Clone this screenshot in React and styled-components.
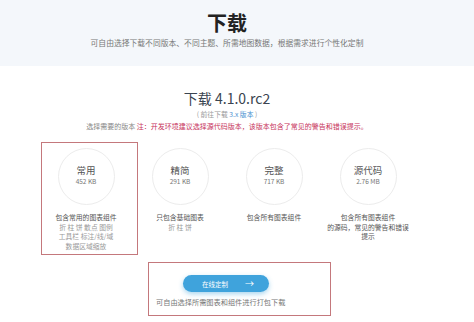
import React from "react";
import styled, { createGlobalStyle } from "styled-components";

const Global = createGlobalStyle`
  html, body { margin: 0; padding: 0; background: #fff; }
  body { font-family: "Noto Sans CJK SC", "Noto Sans", sans-serif; color: #333; width: 474px; height: 322px; overflow: hidden; }
`;

const Header = styled.header`
  background: #f4f7fb;
  height: 66px;
  box-sizing: border-box;
  padding-top: 11px;
`;

const Inner = styled.div`
  width: 454px;
  text-align: center;
`;

const Title = styled.h1`
  margin: 0;
  font-size: 20px;
  line-height: 24px;
  font-weight: 700;
  color: #222;
`;

const Subtitle = styled.p`
  margin: 2px 0 0;
  font-size: 7.8px;
  line-height: 12px;
  color: #777;
`;

const Main = styled.main`
  width: 454px;
  text-align: center;
  padding-top: 22px;
`;

const Version = styled.h2`
  margin: 0;
  font-size: 14px;
  line-height: 20px;
  font-weight: 400;
  color: #3a4450;
`;

const Hint = styled.div`
  margin-top: 1px;
  font-size: 6.8px;
  line-height: 10px;
  color: #999;
`;

const Link = styled.span`
  color: #4a8fcf;
`;

const Notice = styled.div`
  margin-top: 2px;
  font-size: 7px;
  line-height: 10px;
  color: #888;
`;

const Warn = styled.span`
  color: #c7325a;
`;

const Cards = styled.div`
  display: flex;
  padding-left: 39px;
  margin-top: 17px;
`;

const Card = styled.div`
  position: relative;
  width: 94px;
  height: 107px;
  display: flex;
  flex-direction: column;
  align-items: center;
  &::before {
    content: "";
    display: ${(p) => (p.$active ? "block" : "none")};
    position: absolute;
    left: 2px;
    right: -5px;
    top: -6px;
    bottom: 0;
    border: 1px solid #c4787c;
  }
`;

const Circle = styled.div`
  width: 57px;
  height: 57px;
  box-sizing: border-box;
  border: 1px solid #ececec;
  border-radius: 50%;
  display: flex;
  flex-direction: column;
  align-items: center;
  justify-content: center;
  gap: 1px;
  padding-bottom: 3px;
`;

const Name = styled.div`
  font-size: 9.5px;
  line-height: 11px;
  color: #555;
`;

const Size = styled.div`
  font-size: 6.5px;
  line-height: 9px;
  color: #777;
`;

const Desc = styled.div`
  margin-top: 8px;
  font-size: 6.8px;
  line-height: 9.5px;
  text-align: center;
  color: ${(p) => (p.$light ? "#999" : "#555")};
`;

const Extra = styled.div`
  font-size: 6.8px;
  line-height: 9.5px;
  color: #999;
  text-align: center;
`;

const CustomBox = styled.div`
  margin: 7px 0 0 148px;
  width: 183px;
  height: 54px;
  box-sizing: border-box;
  border: 1px solid #c4787c;
  padding: 12px 0 0 7px;
  text-align: left;
`;

const Button = styled.div`
  margin-left: 27px;
  width: 86px;
  height: 17px;
  border-radius: 9px;
  background: #3fa3dc;
  box-shadow: 0 2px 5px rgba(63, 163, 220, 0.45);
  color: #fff;
  font-size: 6.5px;
  display: flex;
  align-items: center;
  justify-content: center;
  gap: 17px;
  padding-left: 4px;
  box-sizing: border-box;
`;

const Arrow = styled.span`
  font-size: 9px;
  line-height: 1;
`;

const BoxText = styled.div`
  margin-top: 5px;
  font-size: 7.2px;
  line-height: 10px;
  color: #777;
`;

const cards = [
  { name: "常用", size: "452 KB", desc: ["包含常用的图表组件"], extra: ["折 柱 饼 散点 图例", "工具栏 标注/线/域", "数据区域缩放"], active: true },
  { name: "精简", size: "291 KB", desc: ["只包含基础图表"], extra: ["折 柱 饼"] },
  { name: "完整", size: "717 KB", desc: ["包含所有图表组件"], extra: [] },
  { name: "源代码", size: "2.76 MB", desc: ["包含所有图表组件", "的源码，常见的警告和错误", "提示"], extra: [] },
];

export default function App() {
  return (
    <>
      <Global />
      <Header>
        <Inner>
          <Title>下载</Title>
          <Subtitle>可自由选择下载不同版本、不同主题、所需地图数据，根据需求进行个性化定制</Subtitle>
        </Inner>
      </Header>
      <Main>
        <Version>下载 4.1.0.rc2</Version>
        <Hint>( 前往下载 <Link>3.x 版本</Link> )</Hint>
        <Notice>
          选择需要的版本 <Warn>注：开发环境建议选择源代码版本，该版本包含了常见的警告和错误提示。</Warn>
        </Notice>
        <Cards>
          {cards.map((c) => (
            <Card key={c.name} $active={c.active}>
              <Circle>
                <Name>{c.name}</Name>
                <Size>{c.size}</Size>
              </Circle>
              <Desc>
                {c.desc.map((d) => (
                  <div key={d}>{d}</div>
                ))}
              </Desc>
              {c.extra.map((e) => (
                <Extra key={e}>{e}</Extra>
              ))}
            </Card>
          ))}
        </Cards>
        <CustomBox>
          <Button>
            <span>在线定制</span>
            <Arrow>→</Arrow>
          </Button>
          <BoxText>可自由选择所需图表和组件进行打包下载</BoxText>
        </CustomBox>
      </Main>
    </>
  );
}
